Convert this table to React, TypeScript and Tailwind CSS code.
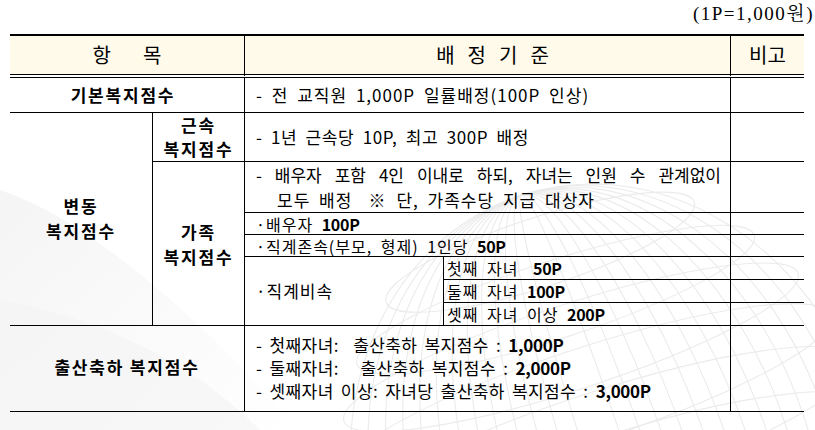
import React from "react";

const meridians = [0, 20, 40, 60, 80, 100, 120, 140, 160, 180, 200, 220, 240, 260];
const parallels = [60, 110, 160, 210, 260, 310, 360];

function Mesh() {
  return (
    <svg
      className="absolute inset-0 pointer-events-none"
      width="815"
      height="430"
      viewBox="0 0 815 430"
    >
      <defs>
        <linearGradient id="sw" x1="0" y1="0" x2="1" y2="1">
          <stop offset="0" stopColor="#f2f2f2" />
          <stop offset="1" stopColor="#ffffff" />
        </linearGradient>
      </defs>
      <path d="M0 190 Q120 230 300 430 L0 430 Z" fill="url(#sw)" opacity="0.8" />
      <path d="M0 300 Q160 330 260 430 L0 430 Z" fill="#f3f3f3" opacity="0.6" />
      <g transform="rotate(-18 640 430)" fill="none" stroke="#ebebeb" strokeWidth="1.1">
        {meridians.map((rx) => (
          <ellipse key={"m" + rx} cx="600" cy="470" rx={rx} ry="300" />
        ))}
        {parallels.map((d) => (
          <ellipse
            key={"p" + d}
            cx="600"
            cy={170 + d}
            rx={Math.sqrt(Math.max(0, 300 * 300 - (300 - d) * (300 - d))) * 0.9}
            ry={30 + d * 0.08}
          />
        ))}
      </g>
    </svg>
  );
}

export default function App() {
  const b = "border-black";
  const body = "tracking-[1px] [word-spacing:4px] text-[17px]";
  const small = "tracking-[1px] [word-spacing:4px] text-[16px]";
  const num = "font-bold tracking-[-0.3px]";
  const label = "text-center font-bold text-[17px] tracking-[1.8px]";
  return (
    <div className="relative w-[815px] h-[430px] bg-white overflow-hidden font-['Noto_Sans_CJK_KR',sans-serif] text-black">
      <Mesh />
      <div className="relative">
        <div className="h-[34px] flex justify-end pr-[1px] pt-[3px]">
          <span className="font-['Liberation_Serif','Noto_Serif_CJK_KR','Noto_Sans_CJK_KR',serif] text-[19px] leading-[22px] tracking-[1.5px]">
            (1P=1,000원)
          </span>
        </div>
        <div className="pl-[10px]">
          <table className="border-separate border-spacing-0 table-fixed w-[794px] border-t-2 border-black text-[17px]">
            <colgroup>
              <col className="w-[143px]" />
              <col className="w-[92px]" />
              <col className="w-[199px]" />
              <col className="w-[287px]" />
              <col className="w-[73px]" />
            </colgroup>
            <tbody>
              <tr className="h-[42px]">
                <th
                  colSpan={2}
                  className={`bg-[#fffaea] bg-clip-padding border-b-4 border-double border-r ${b} font-normal text-[20px]`}
                >
                  <span className="inline-flex gap-[32px]">
                    <span>항</span>
                    <span>목</span>
                  </span>
                </th>
                <th
                  colSpan={2}
                  className={`bg-[#fffaea] bg-clip-padding border-b-4 border-double border-r ${b} font-normal text-[20px]`}
                >
                  <span className="inline-flex gap-[13px] pl-[10px]">
                    <span>배</span>
                    <span>정</span>
                    <span>기</span>
                    <span>준</span>
                  </span>
                </th>
                <th
                  className={`bg-[#fffaea] bg-clip-padding border-b-4 border-double ${b} font-normal text-[20px]`}
                >
                  비고
                </th>
              </tr>

              <tr className="h-[35px]">
                <td colSpan={2} className={`border-b border-r ${b} ${label} pr-[8px]`}>
                  기본복지점수
                </td>
                <td colSpan={2} className={`border-b border-r ${b} pl-[11px] ${body}`}>
                  - 전 교직원 1,000P 일률배정(100P 인상)
                </td>
                <td className={`border-b ${b}`} />
              </tr>

              <tr className="h-[48px]">
                <td rowSpan={7} className={`border-b border-r ${b} ${label} leading-[25px] pb-[2px]`}>
                  <div>변동</div>
                  <div>복지점수</div>
                </td>
                <td className={`border-b border-r ${b} ${label} leading-[24px]`}>
                  <div>근속</div>
                  <div>복지점수</div>
                </td>
                <td colSpan={2} className={`border-b border-r ${b} pl-[11px] tracking-[0.6px] [word-spacing:4px] text-[17px]`}>
                  - 1년 근속당 10P, 최고 300P 배정
                </td>
                <td className={`border-b ${b}`} />
              </tr>

              <tr className="h-[50px]">
                <td rowSpan={6} className={`border-b border-r ${b} ${label} leading-[25px]`}>
                  <div>가족</div>
                  <div>복지점수</div>
                </td>
                <td colSpan={2} className={`border-b border-r ${b} pl-[11px] pr-[9px] leading-[25px] text-[17px]`}>
                  <div className="text-justify [text-align-last:justify]">
                    - 배우자 포함 4인 이내로 하되, 자녀는 인원 수 관계없이
                  </div>
                  <div className={`pl-[21px] ${body}`}>
                    모두 배정
                    <span className="inline-block ml-[16px] mr-[10px] font-bold">※</span>
                    단, 가족수당 지급 대상자
                  </div>
                </td>
                <td className={`border-b ${b}`} />
              </tr>

              <tr className="h-[22px]">
                <td colSpan={2} className={`border-b border-r ${b} pl-[11px] leading-[20px] ${small}`}>
                  ·배우자 <span className={num}>100P</span>
                </td>
                <td className={`border-b ${b}`} />
              </tr>

              <tr className="h-[22px]">
                <td colSpan={2} className={`border-b border-r ${b} pl-[11px] leading-[20px] ${small}`}>
                  ·직계존속(부모, 형제) 1인당 <span className={num}>50P</span>
                </td>
                <td className={`border-b ${b}`} />
              </tr>

              <tr className="h-[23px]">
                <td rowSpan={3} className={`border-b border-r ${b} pl-[11px] ${body}`}>
                  ·직계비속
                </td>
                <td className={`border-b border-r ${b} pl-[3px] leading-[21px] ${small}`}>
                  첫째 자녀 <span className={`${num} ml-[6px]`}>50P</span>
                </td>
                <td className={`border-b ${b}`} />
              </tr>
              <tr className="h-[23px]">
                <td className={`border-b border-r ${b} pl-[3px] leading-[21px] ${small}`}>
                  둘째 자녀 <span className={num}>100P</span>
                </td>
                <td className={`border-b ${b}`} />
              </tr>
              <tr className="h-[23px]">
                <td className={`border-b border-r ${b} pl-[3px] leading-[21px] ${small}`}>
                  셋째 자녀 이상 <span className={num}>200P</span>
                </td>
                <td className={`border-b ${b}`} />
              </tr>

              <tr className="h-[86px]">
                <td colSpan={2} className={`border-b border-r ${b} ${label} pb-[4px]`}>
                  출산축하 복지점수
                </td>
                <td colSpan={2} className={`border-b border-r ${b} pl-[11px] leading-[23px] tracking-[0.4px] [word-spacing:3px] text-[17px] pb-[3px]`}>
                  <div>
                    - 첫째자녀: &nbsp;출산축하 복지점수 : <span className={num}>1,000P</span>
                  </div>
                  <div>
                    - 둘째자녀: &nbsp;&nbsp;출산축하 복지점수 : <span className={num}>2,000P</span>
                  </div>
                  <div>
                    - 셋째자녀 이상: 자녀당 출산축하 복지점수 : <span className={num}>3,000P</span>
                  </div>
                </td>
                <td className={`border-b ${b}`} />
              </tr>
            </tbody>
          </table>
        </div>
      </div>
    </div>
  );
}
